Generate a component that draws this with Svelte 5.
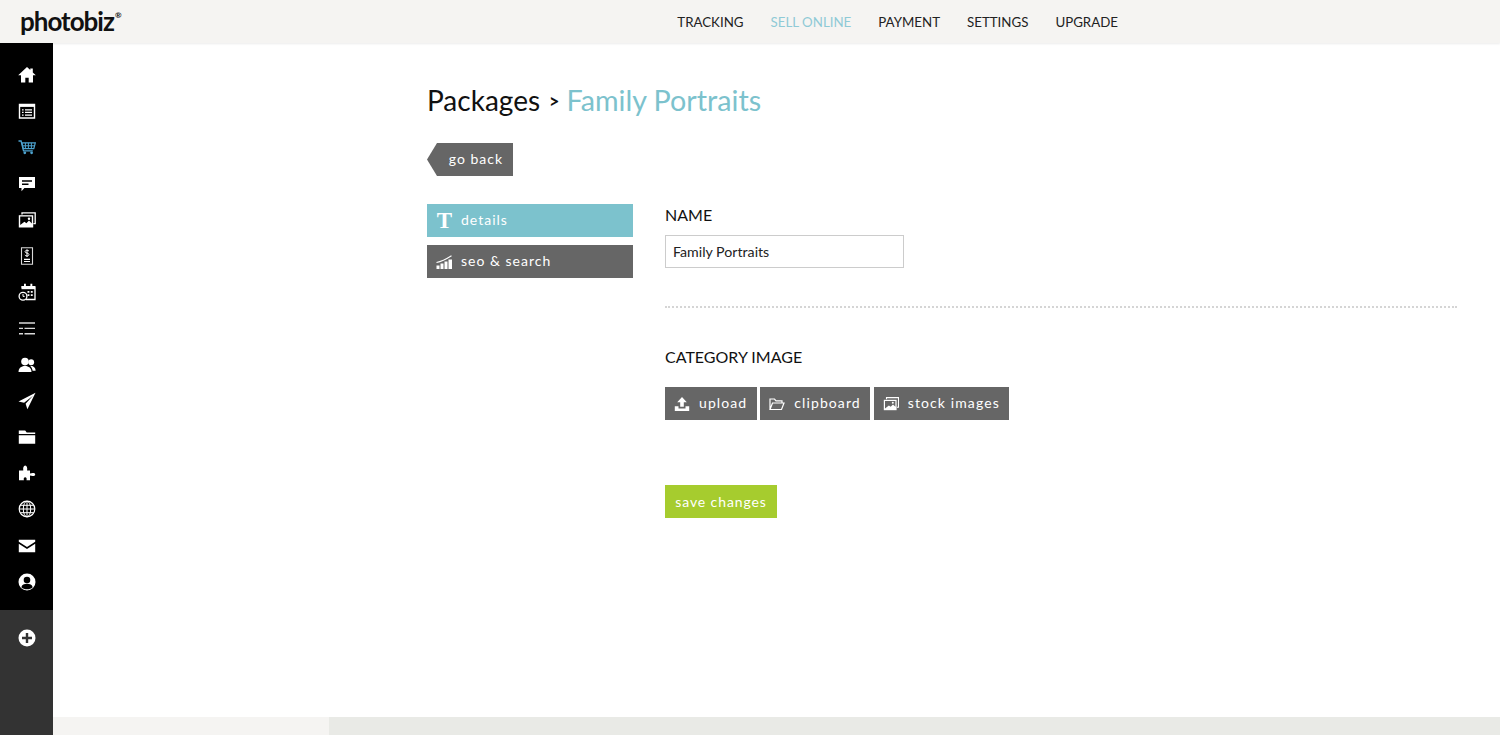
<script>
	const nav = ["TRACKING", "SELL ONLINE", "PAYMENT", "SETTINGS", "UPGRADE"];

	// sidebar icons, all drawn on a 18x18 box
	const sideIcons = [
		{ name: "home", body: `<path d="M9 1 0.2 9.200h2.800V16.500h4.300v-4.800h3.400v4.800H15V9.200h2.800L14.800 6.400V2.400h-2.500v1.700z" fill="currentColor"/>` },
		{ name: "list", body: `<path d="M1.500 2.500h15v13.500h-15z" fill="none" stroke="currentColor" stroke-width="1.400"/><path d="M1.500 2.500h15v2.400h-15z" fill="currentColor"/><path d="M4 7.200h1.600v1.300H4zM7 7.200h7v1.300H7zM4 9.800h1.600v1.300H4zM7 9.800h7v1.300H7zM4 12.400h1.600v1.300H4zM7 12.400h7v1.300H7z" fill="currentColor"/>` },
		{ name: "cart", active: true, body: `<g transform="translate(0 1.500)"><path d="M0.500 1.500h2.600l2.400 9.800h9.300" fill="none" stroke="currentColor" stroke-width="1.300"/><path d="M3.900 3.400h13.400l-1.500 5.800H5.300z" fill="none" stroke="currentColor" stroke-width="1.200"/><path d="M7.400 3.400v5.800M10.400 3.400v5.800M13.400 3.400v5.800M4.500 6.300h12" stroke="currentColor" stroke-width="1"/><circle cx="6.800" cy="13.300" r="1.400" fill="currentColor"/><circle cx="13.600" cy="13.300" r="1.400" fill="currentColor"/></g>` },
		{ name: "chat", body: `<path d="M1 2h16v11H6.400l-2.900 3.200V13H1z" fill="currentColor"/><path d="M4 5.200h10v1.500H4zM4 8.400h6.500v1.500H4z" fill="#000"/>` },
		{ name: "images", body: `<path d="M4 3.400V1.800h13.200v10.800h-1.800" fill="none" stroke="currentColor" stroke-width="1.300"/><path d="M.8 4.200h14.400V16.500H.8z" fill="currentColor"/><path d="M2.200 5.600h11.600v6.800l-2.800-2.800-2.600 2.600-2-1.500-4.200 3.400z" fill="#000"/><circle cx="11" cy="7.700" r="1.200" fill="currentColor"/>` },
		{ name: "invoice", body: `<path d="M3.500 .8h11v16.400h-11z" fill="none" stroke="currentColor" stroke-width="1.100" opacity=".85"/><path d="M6 11.800h6v1.100H6zM6 14h6v1.100H6z" fill="currentColor"/><path d="M11 4.100c-.5-.6-1.200-.8-2-.8-1.100 0-1.900.5-1.900 1.400 0 1.900 3.900.9 3.900 2.900 0 .9-.9 1.400-2 1.400-.9 0-1.700-.3-2.200-1M9 2.400v7.600" fill="none" stroke="currentColor" stroke-width="1"/>` },
		{ name: "calendar", body: `<path d="M3.500 4h13.500v12.500H7.800" fill="none" stroke="currentColor" stroke-width="1.300"/><path d="M3.500 3h13.500v3.200H3.500z" fill="currentColor"/><path d="M6 .8h1.900v3H6zM12.400.8h1.900v3h-1.900z" fill="currentColor"/><path d="M9.500 8h1.900v1.800H9.500zM12.800 8h1.900v1.800h-1.900zM9.500 11.200h1.900V13H9.500zM12.800 11.200h1.900V13h-1.900z" fill="currentColor"/><circle cx="5" cy="13.200" r="3.900" fill="#000" stroke="currentColor" stroke-width="1.300"/><path d="M5 11v2.400h1.700" fill="none" stroke="currentColor" stroke-width="1"/>` },
		{ name: "tasks", body: `<path d="M1 3.300h16v1.400H1zM1 8.700h4v1.400H1zM6.500 8.700H17v1.400H6.500zM1 14h4v1.400H1zM6.500 14H17v1.400H6.500z" fill="currentColor" opacity=".85"/>` },
		{ name: "users", body: `<circle cx="7" cy="5.600" r="3.800" fill="currentColor"/><path d="M.5 16c0-3.800 2.600-6 6.500-6s6.500 2.200 6.500 6z" fill="currentColor"/><circle cx="13.200" cy="6.200" r="2.900" fill="currentColor"/><path d="M12 9.700c3.200 0 5.600 1.500 5.600 5h-3c-.2-2-1.200-3.700-2.600-5z" fill="currentColor"/>` },
		{ name: "send", body: `<path d="M17.500 .8 .5 9.500l5.600 1.200L15 3.800 7.600 11.800 9.400 17.200z" fill="currentColor"/>` },
		{ name: "folder", body: `<path d="M.8 2.600h6.400l1.500 1.800h8.500V6H.8zM.8 7.300h16.400v8.500H.8z" fill="currentColor"/>` },
		{ name: "puzzle", body: `<path d="M1 6.500h4.300c-.5-2.800.3-5 1.900-5s2.400 2.200 1.900 5H12v3c2-.8 5.200-.8 5.200 1s-3.200 1.800-5.200 1v4.700H8.500c.5-1.900-.1-3-1.300-3s-1.800 1.100-1.300 3H1z" fill="currentColor"/>` },
		{ name: "globe", body: `<circle cx="9" cy="9" r="7.800" fill="none" stroke="currentColor" stroke-width="1.200"/><ellipse cx="9" cy="9" rx="3.700" ry="7.800" fill="none" stroke="currentColor" stroke-width="1"/><path d="M9 1.200v15.600M1.200 9h15.600M2.300 5.300h13.400M2.300 12.700h13.400" stroke="currentColor" stroke-width="1"/>` },
		{ name: "mail", body: `<path d="M.8 2.800h16.400v2L9 9.900.8 4.800zM.8 6.800 9 11.900l8.200-5.100v8.400H.8z" fill="currentColor"/>` },
		{ name: "account", body: `<circle cx="9" cy="9" r="8.500" fill="currentColor"/><circle cx="9" cy="7" r="3.300" fill="#000"/><path d="M3.300 14.200c.7-2.600 2.800-3.500 5.700-3.500s5 .9 5.700 3.500C13.200 15.600 11.300 16.200 9 16.200s-4.200-.6-5.700-2z" fill="#000"/>` }
	];

	const tools = [
		{ label: "upload", body: `<path d="M8 1 3.200 6.200h3v4.500h3.600V6.200h3zM0.800 10.200h3.700v2.200h7v-2.200h3.700V15H.8z" fill="currentColor"/>` },
		{ label: "clipboard", body: `<path d="M1 13.500V3h4.500l1.500 1.800h6V7M1 13.500h11.500L15 7H3.500z" fill="none" stroke="currentColor" stroke-width="1.200"/>` },
		{ label: "stock images", body: `<path d="M3.500 3.200V1.600h12v9.600h-1.500" fill="none" stroke="currentColor" stroke-width="1.100"/><path d="M.8 3.800h12.800v10.400H.8z" fill="currentColor"/><path d="M2 5h10.400v5.800L10 8.500l-2.300 2.200-1.800-1.200L2 12.500z" fill="#666"/><circle cx="9.800" cy="6.700" r="1" fill="currentColor"/>` }
	];
</script>

<div class="shell">
	<header class="topbar">
		<div class="logo">photobiz<sup>®</sup></div>
		<nav class="topnav">
			{#each nav as item}
				<span class:current={item === "SELL ONLINE"}>{item}</span>
			{/each}
		</nav>
	</header>

	<aside class="side">
		<div class="side-main">
			{#each sideIcons as icon}
				<div class="side-icon" class:active={icon.active}>
					<svg viewBox="0 0 18 18" width="18" height="18">{@html icon.body}</svg>
				</div>
			{/each}
		</div>
		<div class="side-add">
			<svg viewBox="0 0 18 18" width="18" height="18">
				<circle cx="9" cy="9" r="8.500" fill="#fff" />
				<path d="M4 7.800h3.800V4h2.400v3.800H14v2.400h-3.800V14H7.800v-3.800H4z" fill="#333" />
			</svg>
		</div>
	</aside>

	<main class="content">
		<h1><span>Packages</span><b>&gt;</b><em>Family Portraits</em></h1>
		<button class="back">go back</button>

		<div class="columns">
			<div class="tabs">
				<div class="tab on">
					<span class="tee">T</span>
					<span>details</span>
				</div>
				<div class="tab">
					<svg viewBox="0 0 17 14" width="17" height="14">
						<path d="M.5 10.500h3V14h-3zM4.500 8.500h3V14h-3zM8.500 6.500h3V14h-3zM12.500 4.500h3.500V14h-3.500z" fill="#fff" />
						<path d="M.5 7.500C6 6.500 10.500 4 15.500.8" fill="none" stroke="#fff" stroke-width="1.100" />
					</svg>
					<span>seo &amp; search</span>
				</div>
			</div>

			<div class="form">
				<div class="label">NAME</div>
				<input class="name" value="Family Portraits" />
				<div class="rule"></div>
				<div class="label">CATEGORY IMAGE</div>
				<div class="tools">
					{#each tools as tool}
						<button class="tool">
							<svg viewBox="0 0 16 16" width="16" height="16">{@html tool.body}</svg>
							{tool.label}
						</button>
					{/each}
				</div>
				<button class="save">save changes</button>
			</div>
		</div>
	</main>

	<footer class="foot">
		<div class="foot-left"></div>
		<div class="foot-right"></div>
	</footer>
</div>

<style>
	:global(body) {
		background: #fff;
		overflow: hidden;
	}

	.shell {
		display: grid;
		grid-template-columns: 53px 1fr;
		grid-template-rows: 43px 1fr 18px;
		height: 735px;
		font-family: Lato, "Open Sans", sans-serif;
		color: #111;
	}

	.topbar {
		grid-column: 1 / 3;
		display: flex;
		align-items: center;
		background: #f5f4f2;
		box-shadow: 0 1px 2px rgba(0, 0, 0, 0.08);
		position: relative;
		z-index: 2;
	}

	.logo {
		margin-left: 20px;
		margin-top: -2px;
		font-weight: 700;
		font-size: 26px;
		letter-spacing: -1px;
		line-height: 1;
		color: #111;
	}

	.logo sup {
		font-size: 8px;
		vertical-align: 13px;
		line-height: 0;
		margin-left: 1px;
		letter-spacing: 0;
	}

	.topnav {
		display: flex;
		gap: 27px;
		margin-left: auto;
		padding-right: 382px;
		font-size: 13.300px;
		color: #222;
	}

	.current {
		color: #8fcad6;
	}

	.side {
		grid-row: 2 / 4;
		display: flex;
		flex-direction: column;
		background: #333;
		position: relative;
		z-index: 3;
	}

	.side-main {
		background: #000;
		height: 567px;
		padding-top: 14px;
		box-sizing: border-box;
	}

	.side-icon {
		display: flex;
		align-items: center;
		justify-content: center;
		height: 36.200px;
		color: #fff;
	}

	.side-icon.active {
		color: #4da3cf;
	}

	.side-add {
		display: flex;
		justify-content: center;
		padding-top: 19px;
	}

	.content {
		padding: 41px 0 0 374px;
		min-width: 0;
	}

	h1 {
		margin: 0;
		font-size: 28px;
		font-weight: 400;
		line-height: 32px;
		height: 33px;
		color: #111;
	}

	h1 b {
		font-size: 18px;
		font-weight: 700;
		margin: 0 7px 0 9px;
		vertical-align: 3px;
	}

	h1 em {
		font-style: normal;
		font-size: 28.700px;
		color: #7cc2cd;
	}

	button {
		border: 0;
		font: inherit;
		color: #fff;
	}

	.back,
	.tab,
	.tool,
	.save {
		box-sizing: border-box;
		height: 33px;
		font-size: 14px;
		letter-spacing: 1px;
		background: #666;
		color: #fff;
		padding: 0;
	}

	.back {
		display: block;
		width: 86px;
		margin-top: 26px;
		padding: 0 0 2px 12px;
		clip-path: polygon(10px 0, 100% 0, 100% 100%, 10px 100%, 0 50%);
	}

	.columns {
		display: flex;
		gap: 32px;
		margin-top: 28px;
		padding-right: 43px;
	}

	.tabs {
		display: flex;
		flex-direction: column;
		gap: 8px;
		flex: 0 0 206px;
	}

	.tab {
		display: flex;
		align-items: center;
		gap: 8px;
		padding: 0 0 3px 9px;
	}

	.tab svg {
		margin-top: 3px;
	}

	.tab.on {
		background: #7cc2cd;
	}

	.tee {
		width: 17px;
		text-align: center;
		font-family: "Liberation Serif", serif;
		font-weight: 700;
		font-size: 23px;
		letter-spacing: 0;
		line-height: 1;
		margin-top: 3px;
	}

	.form {
		flex: 1;
		min-width: 0;
	}

	.label {
		font-size: 16px;
		line-height: 22px;
		color: #111;
	}

	.name {
		display: block;
		box-sizing: border-box;
		width: 239px;
		height: 33px;
		margin-top: 9px;
		padding: 0 7px;
		border: 1px solid #ccc;
		font-family: inherit;
		font-size: 14.200px;
		color: #222;
		outline: 0;
	}

	.rule {
		border-top: 2px dotted #d5d5d5;
		margin: 38px 0 38px;
	}

	.tools {
		display: flex;
		gap: 3.500px;
		margin-top: 19px;
	}

	.tool {
		display: flex;
		align-items: center;
		gap: 9px;
		padding: 0 9.500px 2px 9px;
		letter-spacing: 1.100px;
	}

	.tool svg {
		margin-top: 2px;
	}

	.save {
		display: block;
		width: 112px;
		margin-top: 65px;
		background: #a6cc2e;
		letter-spacing: 0.900px;
	}

	.foot {
		display: flex;
	}

	.foot-left {
		width: 276px;
		background: #f5f4f2;
	}

	.foot-right {
		flex: 1;
		background: #e9eae6;
	}
</style>
